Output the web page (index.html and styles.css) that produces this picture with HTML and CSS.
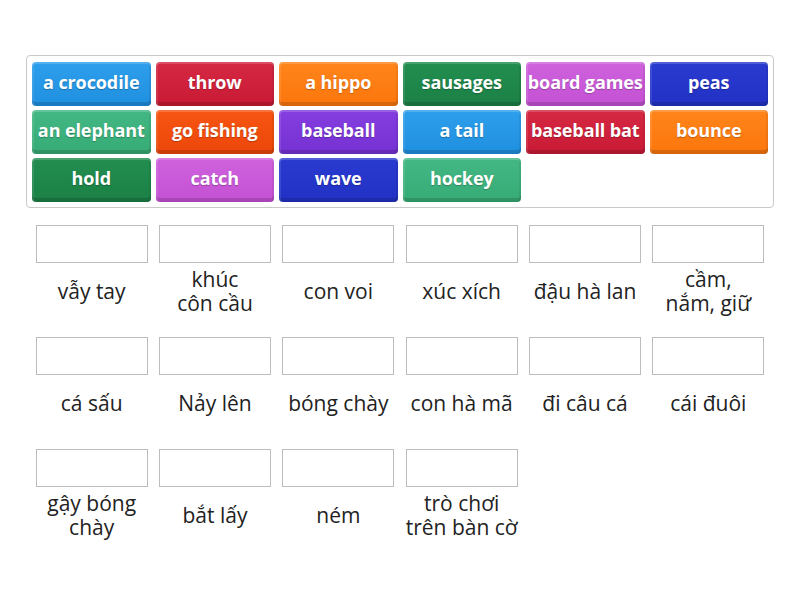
FILE: index.html
```html
<!DOCTYPE html>
<html lang="vi">
<head>
<meta charset="utf-8">
<title>Match up</title>
<link rel="stylesheet" href="styles.css">
</head>
<body>
<div class="page">
  <div class="bank">
    <div class="tile blue">a crocodile</div>
    <div class="tile red">throw</div>
    <div class="tile orange">a hippo</div>
    <div class="tile dgreen">sausages</div>
    <div class="tile pink">board games</div>
    <div class="tile navy">peas</div>
    <div class="tile green">an elephant</div>
    <div class="tile vermil">go fishing</div>
    <div class="tile purple">baseball</div>
    <div class="tile blue">a tail</div>
    <div class="tile red">baseball bat</div>
    <div class="tile orange">bounce</div>
    <div class="tile dgreen">hold</div>
    <div class="tile pink">catch</div>
    <div class="tile navy">wave</div>
    <div class="tile green">hockey</div>
  </div>

  <div class="answers">
    <div class="cell"><div class="slot"></div><div class="label">vẫy tay</div></div>
    <div class="cell"><div class="slot"></div><div class="label">khúc<br>côn cầu</div></div>
    <div class="cell"><div class="slot"></div><div class="label">con voi</div></div>
    <div class="cell"><div class="slot"></div><div class="label">xúc xích</div></div>
    <div class="cell"><div class="slot"></div><div class="label">đậu hà lan</div></div>
    <div class="cell"><div class="slot"></div><div class="label">cầm,<br>nắm, giữ</div></div>

    <div class="cell"><div class="slot"></div><div class="label">cá sấu</div></div>
    <div class="cell"><div class="slot"></div><div class="label">Nảy lên</div></div>
    <div class="cell"><div class="slot"></div><div class="label">bóng chày</div></div>
    <div class="cell"><div class="slot"></div><div class="label">con hà mã</div></div>
    <div class="cell"><div class="slot"></div><div class="label">đi câu cá</div></div>
    <div class="cell"><div class="slot"></div><div class="label">cái đuôi</div></div>

    <div class="cell"><div class="slot"></div><div class="label">gậy bóng<br>chày</div></div>
    <div class="cell"><div class="slot"></div><div class="label">bắt lấy</div></div>
    <div class="cell"><div class="slot"></div><div class="label">ném</div></div>
    <div class="cell"><div class="slot"></div><div class="label">trò chơi<br>trên bàn cờ</div></div>
  </div>
</div>
</body>
</html>
```

FILE: styles.css
```css
html, body {
  margin: 0;
  padding: 0;
  background: #ffffff;
}

body {
  font-family: "Open Sans", "Noto Sans", sans-serif;
  width: 800px;
  height: 600px;
  overflow: hidden;
}

.page {
  padding: 55px 26px 0 26px;
}

.bank {
  border: 1px solid #c9c9c9;
  border-radius: 4px;
  padding: 6px 5px 5px 5px;
  display: grid;
  grid-template-columns: repeat(6, 1fr);
  column-gap: 5px;
  row-gap: 4px;
  grid-auto-rows: 44px;
}

.tile {
  display: flex;
  align-items: center;
  justify-content: center;
  padding-bottom: 4px;
  box-sizing: border-box;
  border-radius: 4px;
  color: #ffffff;
  font-weight: 700;
  font-size: 18px;
  letter-spacing: -0.1px;
  white-space: nowrap;
  text-shadow: 0 1px 1px rgba(0, 0, 0, 0.25);
  box-shadow:
    inset 0 2px 0 rgba(255, 255, 255, 0.18),
    inset 2px 0 0 rgba(255, 255, 255, 0.10),
    inset -2px 0 0 rgba(0, 0, 0, 0.06),
    inset 0 -4px 0 rgba(0, 0, 0, 0.14);
}

.blue   { background: linear-gradient(#2e9fec, #1f8fdf); }
.red    { background: linear-gradient(#d52843, #c91a35); }
.orange { background: linear-gradient(#ff851b, #fb760c); }
.dgreen { background: linear-gradient(#238e50, #1b8045); }
.pink   { background: linear-gradient(#cf62dd, #c451d4); }
.navy   { background: linear-gradient(#2a3bd0, #2231c4); }
.green  { background: linear-gradient(#44b884, #37ab76); }
.vermil { background: linear-gradient(#f75613, #ec460a); }
.purple { background: linear-gradient(#853edf, #7631d3); }

.answers {
  margin: 17px 4px 0 4px;
  display: grid;
  grid-template-columns: repeat(6, 1fr);
  row-gap: 18px;
}

.cell {
  display: flex;
  flex-direction: column;
  align-items: center;
}

.slot {
  width: 112px;
  height: 38px;
  box-sizing: border-box;
  border: 1px solid #bdbdbd;
  background: #ffffff;
}

.label {
  height: 56px;
  display: flex;
  align-items: center;
  justify-content: center;
  text-align: center;
  font-size: 21px;
  line-height: 24px;
  color: #222222;
  white-space: nowrap;
}
```
